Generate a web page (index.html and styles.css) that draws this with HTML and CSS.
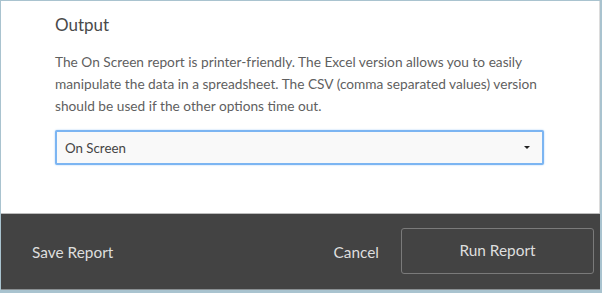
FILE: index.html
```html
<!DOCTYPE html>
<html>
<head>
<meta charset="utf-8">
<link rel="stylesheet" href="styles.css">
</head>
<body>
<div class="frame">
  <div class="content">
    <h2 class="title">Output</h2>
    <p class="desc">The On Screen report is printer-friendly. The Excel version allows you to easily manipulate the data in a spreadsheet. The CSV (comma separated values) version should be used if the other options time out.</p>
    <div class="select">
      <span class="select-value">On Screen</span>
      <span class="caret"></span>
    </div>
  </div>
  <div class="footer">
    <span class="save">Save Report</span>
    <div class="actions">
      <span class="cancel">Cancel</span>
      <button class="run">Run Report</button>
    </div>
  </div>
</div>
</body>
</html>
```
FILE: styles.css
```css
* { box-sizing: border-box; }
html, body { margin: 0; padding: 0; }
body {
  width: 602px;
  height: 293px;
  font-family: Lato, "Open Sans", sans-serif;
  background: #a9c3cf;
}
.frame {
  width: 602px;
  height: 293px;
  border-left: 1px solid #a9c3cf;
  border-top: 1px solid #a9c3cf;
  border-right: 2px solid #a9c3cf;
  border-bottom: 3px solid #a9c3cf;
  display: flex;
  flex-direction: column;
  background: #fff;
}
.content {
  height: 212px;
  padding: 12px 0 0 54px;
  background: #fff;
  border-right: 1px solid #dcdcdc;
}
.title {
  margin: 0;
  font-size: 17px;
  font-weight: 400;
  color: #4a4a4a;
  line-height: 24px;
}
.desc {
  margin: 14px 0 0;
  width: 500px;
  font-size: 13.7px;
  line-height: 22px;
  color: #5f5f5f;
}
.select {
  margin-top: 13px;
  width: 489px;
  height: 35px;
  border: 2px solid #7cb5f2;
  box-shadow: 0 0 2px #a8cff7;
  border-radius: 2px;
  background: #f9f9f9;
  display: flex;
  align-items: center;
  justify-content: space-between;
  padding: 0 12px 0 8px;
}
.select-value {
  font-size: 13.3px;
  color: #444;
}
.caret {
  width: 0;
  height: 0;
  border-left: 3px solid transparent;
  border-right: 3px solid transparent;
  border-top: 3px solid #222;
}
.footer {
  flex: 1;
  background: #434343;
  border-top: 1px solid #bcbcbc;
  border-bottom: 1px solid #8a8f92;
  display: flex;
  align-items: center;
  justify-content: space-between;
  padding: 0 6px 0 31px;
}
.save, .cancel {
  font-size: 15.4px;
  color: #dedede;
}
.actions {
  display: flex;
  align-items: center;
  gap: 22px;
}
.run {
  width: 193px;
  height: 46px;
  background: transparent;
  border: 1px solid #7a7a7a;
  border-radius: 3px;
  color: #dedede;
  font-family: inherit;
  font-size: 15.4px;
  padding: 0 0 2px;
  margin-top: -2px;
}
```
